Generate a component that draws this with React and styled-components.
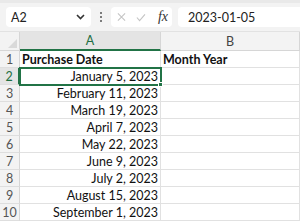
import { Fragment } from "react";
import styled, { createGlobalStyle } from "styled-components";

const GlobalStyle = createGlobalStyle`
  html, body {
    margin: 0;
    padding: 0;
    background: #ffffff;
  }
  body {
    font-family: Lato, "Liberation Sans", sans-serif;
  }
`;

const Page = styled.div`
  width: 300px;
  height: 223px;
  overflow: hidden;
  background: #ffffff;
`;

const Toolbar = styled.div`
  height: 28px;
  border-top: 3px solid #e9e9e9;
  background: #f3f3f3;
  display: flex;
  align-items: center;
  padding: 0 0 0 6px;
  gap: 6px;
  border-bottom: 1px solid #e2e2e2;
`;

const NameBox = styled.div`
  width: 85px;
  height: 20px;
  box-sizing: border-box;
  background: #ffffff;
  border-radius: 4px;
  display: flex;
  align-items: center;
  justify-content: space-between;
  padding: 0 6px 0 5px;
  font-size: 12.5px;
  color: #222;
`;

const Dots = styled.div`
  display: flex;
  flex-direction: column;
  gap: 2px;
  padding: 0 3px;
  span {
    width: 2px;
    height: 2px;
    border-radius: 1px;
    background: #555;
  }
`;

const ActionBox = styled.div`
  width: 61px;
  height: 20px;
  box-sizing: border-box;
  background: #ffffff;
  border-radius: 4px;
  display: flex;
  align-items: center;
  padding: 0 4px 0 6px;
  gap: 10px;
`;

const Fx = styled.span`
  font-family: "Liberation Serif", serif;
  font-style: italic;
  font-size: 14px;
  color: #333;
  margin-left: 2px;
`;

const FormulaInput = styled.div`
  flex: 1;
  height: 20px;
  background: #ffffff;
  border-radius: 4px 0 0 4px;
  display: flex;
  align-items: center;
  padding-left: 10px;
  font-size: 12.5px;
  color: #222;
`;

const Sheet = styled.div`
  display: grid;
  grid-template-columns: 20px 141px 139px;
  grid-auto-rows: 17px;
  grid-template-rows: 19px;
`;

const Corner = styled.div`
  background: #f3f3f3;
  border-right: 1px solid #d6d6d6;
  border-bottom: 1px solid #d6d6d6;
  position: relative;
  &::after {
    content: "";
    position: absolute;
    right: 2px;
    bottom: 2px;
    border-style: solid;
    border-width: 0 0 9px 9px;
    border-color: transparent transparent #d9d9d9 transparent;
  }
`;

const ColHead = styled.div`
  background: ${(p) => (p.$active ? "#e4e4e4" : "#f3f3f3")};
  border-right: 1px solid #d6d6d6;
  border-bottom: ${(p) => (p.$active ? "2px solid #217346" : "1px solid #d6d6d6")};
  color: ${(p) => (p.$active ? "#1e6e42" : "#444")};
  font-size: 12.5px;
  display: flex;
  align-items: center;
  justify-content: center;
  box-sizing: border-box;
`;

const RowHead = styled.div`
  background: ${(p) => (p.$active ? "#e4e4e4" : "#f3f3f3")};
  border-right: ${(p) => (p.$active ? "2px solid #217346" : "1px solid #d6d6d6")};
  border-bottom: 1px solid #dedede;
  color: ${(p) => (p.$active ? "#1e6e42" : "#555")};
  font-size: 12.5px;
  display: flex;
  align-items: center;
  justify-content: center;
  box-sizing: border-box;
`;

const Cell = styled.div`
  border-right: 1px solid #e1e1e1;
  border-bottom: 1px solid #e1e1e1;
  box-sizing: border-box;
  font-size: 12.5px;
  color: #111;
  display: flex;
  align-items: center;
  justify-content: ${(p) => (p.$right ? "flex-end" : "flex-start")};
  padding: 0 2px;
  font-weight: ${(p) => (p.$bold ? 700 : 400)};
  white-space: nowrap;
  position: relative;
  ${(p) =>
    p.$selected &&
    `
    outline: 2px solid #217346;
    outline-offset: -1px;
    z-index: 1;
    &::after {
      content: "";
      position: absolute;
      right: -3px;
      bottom: -3px;
      width: 5px;
      height: 5px;
      background: #217346;
      border: 1px solid #fff;
      box-sizing: border-box;
    }
  `}
`;

const dates = [
  "January 5, 2023",
  "February 11, 2023",
  "March 19, 2023",
  "April 7, 2023",
  "May 22, 2023",
  "June 9, 2023",
  "July 2, 2023",
  "August 15, 2023",
  "September 1, 2023",
];

export default function App() {
  return (
    <Page>
      <GlobalStyle />
      <Toolbar>
        <NameBox>
          <span>A2</span>
          <svg width="9" height="6" viewBox="0 0 9 6">
            <path d="M1 1l3.5 3.5L8 1" stroke="#333" strokeWidth="1.6" fill="none" />
          </svg>
        </NameBox>
        <Dots>
          <span />
          <span />
          <span />
        </Dots>
        <ActionBox>
          <svg width="10" height="10" viewBox="0 0 10 10">
            <path d="M1 1l8 8M9 1l-8 8" stroke="#c4c4c4" strokeWidth="1.2" />
          </svg>
          <svg width="11" height="9" viewBox="0 0 11 9">
            <path d="M1 4.5l3 3.5 6-7" stroke="#c4c4c4" strokeWidth="1.2" fill="none" />
          </svg>
          <Fx>fx</Fx>
        </ActionBox>
        <FormulaInput>2023-01-05</FormulaInput>
      </Toolbar>
      <Sheet>
        <Corner />
        <ColHead $active>A</ColHead>
        <ColHead>B</ColHead>
        <RowHead>1</RowHead>
        <Cell $bold>Purchase Date</Cell>
        <Cell $bold>Month Year</Cell>
        {dates.map((d, i) => (
          <Fragment key={d}>
            <RowHead $active={i === 0}>{i + 2}</RowHead>
            <Cell $right $selected={i === 0}>
              {d}
            </Cell>
            <Cell />
          </Fragment>
        ))}
      </Sheet>
    </Page>
  );
}
